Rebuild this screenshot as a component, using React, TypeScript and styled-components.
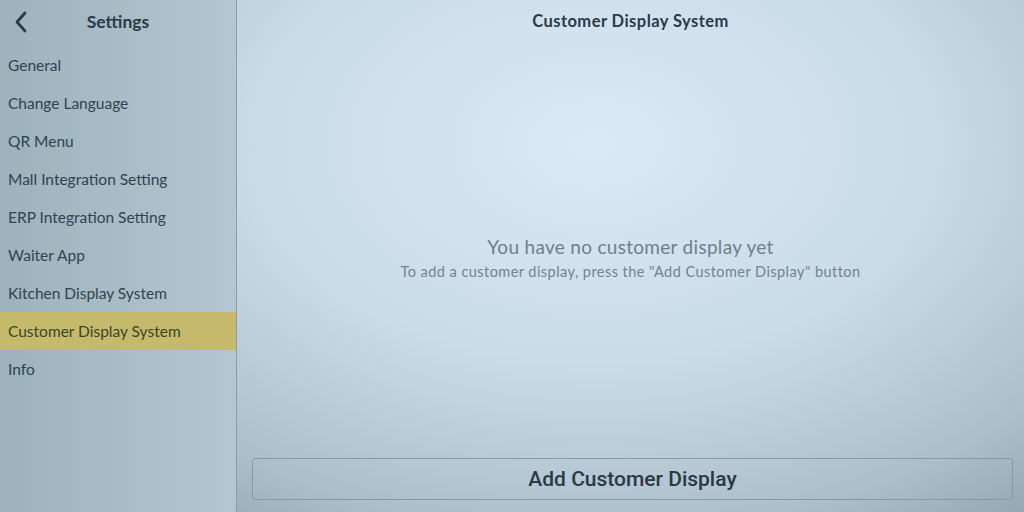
import React from "react"
import styled, { createGlobalStyle } from "styled-components"

const GlobalStyle = createGlobalStyle`
  html, body {
    margin: 0;
    padding: 0;
    height: 100%;
  }
  body {
    font-family: Lato, "Open Sans", sans-serif;
    color: #2c3e4c;
  }
`

const Screen = styled.div`
  display: flex;
  width: 1024px;
  height: 512px;
  overflow: hidden;
  background: radial-gradient(
    ellipse 72% 95% at 58% 28%,
    #dbe9f4 0%,
    #cadce8 45%,
    #acbfc9 80%,
    #8ea2ab 100%
  );
`

const Sidebar = styled.aside`
  width: 236px;
  flex-shrink: 0;
  display: flex;
  flex-direction: column;
  background: linear-gradient(90deg, #9db2ba 0%, #b4c7d0 100%);
  border-right: 1px solid rgba(110, 132, 142, 0.45);
`

const SidebarHeader = styled.div`
  height: 44px;
  display: flex;
  align-items: center;
  justify-content: center;
  padding-bottom: 2px;
  box-sizing: border-box;
  position: relative;
`

const BackButton = styled.button`
  position: absolute;
  left: 9px;
  top: 10px;
  width: 24px;
  height: 24px;
  padding: 0;
  border: none;
  background: none;
  display: flex;
  align-items: center;
  justify-content: center;
  cursor: pointer;
`

const SidebarTitle = styled.h1`
  margin: 0;
  font-size: 17.5px;
  font-weight: 700;
  color: #2a3b48;
`

const Menu = styled.ul`
  list-style: none;
  margin: 0;
  padding: 2px 0 0;
`

const MenuItem = styled.li<{ $active?: boolean }>`
  height: 38px;
  display: flex;
  align-items: center;
  padding-left: 8px;
  font-size: 15.5px;
  color: ${({ $active }) => ($active ? "#3a4528" : "#2f4452")};
  background: ${({ $active }) => ($active ? "#c5ba6c" : "transparent")};
`

const Main = styled.main`
  flex: 1;
  display: flex;
  flex-direction: column;
`

const MainHeader = styled.div`
  height: 44px;
  display: flex;
  align-items: center;
  justify-content: center;
  padding-bottom: 2px;
  box-sizing: border-box;
`

const MainTitle = styled.h2`
  margin: 0;
  font-size: 16.5px;
  font-weight: 700;
  letter-spacing: 0.45px;
  color: #2a3a4a;
`

const Empty = styled.div`
  flex: 1;
  display: flex;
  flex-direction: column;
  align-items: center;
  justify-content: center;
  padding-top: 12px;
  gap: 5px;
`

const EmptyTitle = styled.p`
  margin: 0;
  font-size: 19px;
  letter-spacing: 0.3px;
  color: #6f7f8a;
`

const EmptyHint = styled.p`
  margin: 0;
  font-size: 14.5px;
  letter-spacing: 0.45px;
  color: #73838e;
`

const Footer = styled.div`
  padding: 0 11px 12px 15px;
`

const AddButton = styled.button`
  width: 100%;
  height: 42px;
  border: 1px solid #8899a2;
  border-radius: 3px;
  background: transparent;
  font-family: Roboto, "Liberation Sans", sans-serif;
  font-size: 21px;
  font-weight: 500;
  color: #2b3847;
  cursor: pointer;
`

const items = [
  "General",
  "Change Language",
  "QR Menu",
  "Mall Integration Setting",
  "ERP Integration Setting",
  "Waiter App",
  "Kitchen Display System",
  "Customer Display System",
  "Info",
]

export default function App() {
  return (
    <>
      <GlobalStyle />
      <Screen>
        <Sidebar>
          <SidebarHeader>
            <BackButton aria-label="Back">
              <svg width="16" height="22" viewBox="0 0 16 22">
                <polyline
                  points="12,2 4,11 12,20"
                  fill="none"
                  stroke="#2a3b48"
                  strokeWidth="2.8"
                  strokeLinecap="round"
                  strokeLinejoin="round"
                />
              </svg>
            </BackButton>
            <SidebarTitle>Settings</SidebarTitle>
          </SidebarHeader>
          <Menu>
            {items.map(item => (
              <MenuItem key={item} $active={item === "Customer Display System"}>
                {item}
              </MenuItem>
            ))}
          </Menu>
        </Sidebar>
        <Main>
          <MainHeader>
            <MainTitle>Customer Display System</MainTitle>
          </MainHeader>
          <Empty>
            <EmptyTitle>You have no customer display yet</EmptyTitle>
            <EmptyHint>
              To add a customer display, press the "Add Customer Display" button
            </EmptyHint>
          </Empty>
          <Footer>
            <AddButton>Add Customer Display</AddButton>
          </Footer>
        </Main>
      </Screen>
    </>
  )
}
